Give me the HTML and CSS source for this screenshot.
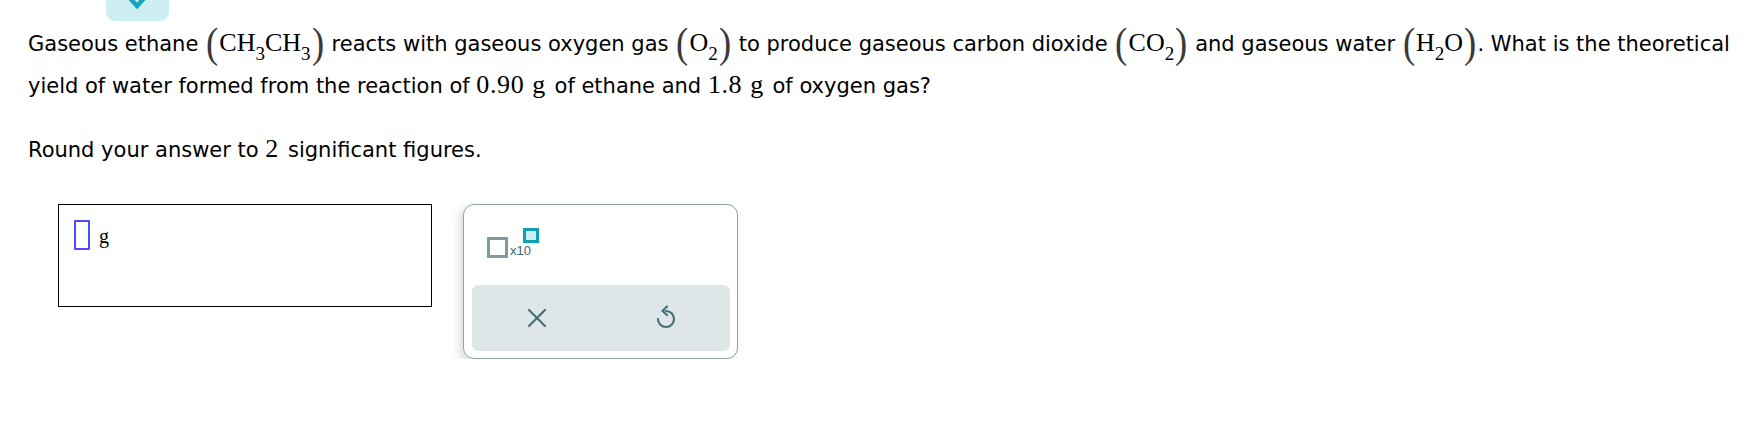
FILE: index.html
```html
<!DOCTYPE html>
<html>
<head>
<meta charset="utf-8">
<link rel="stylesheet" href="styles.css">
</head>
<body>
<div class="page">
  <div class="tab-row">
    <div class="tab">
      <svg class="chev" width="26" height="12" viewBox="0 0 26 12"><polyline points="3,-4 12,6 21,-4" fill="none" stroke="#19a2bb" stroke-width="4.5" stroke-linejoin="miter"/></svg>
    </div>
  </div>
  <div class="question">
    <p class="q-line">Gaseous ethane <span class="m"><span class="paren">(</span>CH<span class="sub">3</span>CH<span class="sub">3</span><span class="paren">)</span></span> reacts with gaseous oxygen gas <span class="m"><span class="paren">(</span>O<span class="sub">2</span><span class="paren">)</span></span> to produce gaseous carbon dioxide <span class="m"><span class="paren">(</span>CO<span class="sub">2</span><span class="paren">)</span></span> and gaseous water <span class="m"><span class="paren">(</span>H<span class="sub">2</span>O<span class="paren">)</span></span>. What is the theoretical</p>
    <p class="q-line">yield of water formed from the reaction of <span class="m num">0.90<span class="g">g</span></span> of ethane and <span class="m num">1.8<span class="g">g</span></span> of oxygen gas?</p>
    <p class="q-round">Round your answer to <span class="m sig">2</span> significant figures.</p>
  </div>
  <div class="answer-row">
    <div class="answer-box">
      <span class="slot"></span><span class="unit">g</span>
    </div>
    <div class="palette">
      <div class="tools">
        <div class="sci">
          <span class="sci-box"></span><span class="sci-x">x10</span><span class="sci-exp"></span>
        </div>
      </div>
      <div class="actions">
        <button class="act" aria-label="clear">
          <svg width="20" height="20" viewBox="0 0 20 20"><path d="M2 2 L18 18 M18 2 L2 18" stroke="#466f7c" stroke-width="2.2" stroke-linecap="round" fill="none"/></svg>
        </button>
        <button class="act" aria-label="undo">
          <svg width="22" height="26" viewBox="0 0 22 26"><path d="M11 6 A8 8 0 1 1 3 14" stroke="#466f7c" stroke-width="2.2" fill="none" stroke-linecap="round"/><path d="M12 1.5 L7.5 6 L12 10" stroke="#466f7c" stroke-width="2.2" fill="none" stroke-linecap="round" stroke-linejoin="round"/></svg>
        </button>
      </div>
    </div>
  </div>
</div>
</body>
</html>
```
FILE: styles.css
```css
html, body {
  margin: 0;
  padding: 0;
  background: #ffffff;
}
.page {
  font-family: "DejaVu Sans", Verdana, sans-serif;
  color: #000;
  font-size: 21px;
}
.tab-row {
  height: 21px;
  padding-left: 106px;
}
.tab {
  width: 63px;
  height: 21px;
  background: #cdeef3;
  border-radius: 0 0 9px 9px;
  display: flex;
  justify-content: center;
}
.chev {
  display: block;
  margin-left: 1px;
}
.question {
  padding-left: 28px;
}
.q-line {
  margin: 0;
  line-height: 42px;
  white-space: nowrap;
}
.q-line:first-child {
  margin-top: 2px;
}
.q-round {
  margin: 22px 0 0 0;
  line-height: 42px;
}
.m {
  font-family: "Liberation Serif", "Times New Roman", serif;
  font-size: 26px;
  line-height: 0;
}
.num {
  letter-spacing: 0.6px;
}
.sig {
  margin-right: 3px;
}
.g {
  margin-left: 8px;
  margin-right: 2px;
}
.paren {
  display: inline-block;
  font-size: 43px;
  line-height: 0;
  color: #3a3a3a;
  vertical-align: -6px;
  transform: scaleX(0.85);
}
.sub {
  font-size: 19px;
  vertical-align: -9px;
  line-height: 0;
}
.answer-row {
  display: flex;
  align-items: flex-start;
  gap: 31px;
  margin-top: 33px;
  padding-left: 58px;
}
.answer-box {
  width: 372px;
  height: 101px;
  border: 1px solid #000;
  display: flex;
  align-items: flex-start;
  padding: 0;
}
.slot {
  display: block;
  width: 12px;
  height: 26px;
  border: 2px solid #4d4dff;
  border-radius: 1px;
  margin: 15px 0 0 15px;
}
.unit {
  font-family: "Liberation Serif", "Times New Roman", serif;
  font-size: 20px;
  margin: 19px 0 0 9px;
  line-height: 24px;
}
.palette {
  width: 275px;
  height: 155px;
  border: 1px solid #8fa2a8;
  border-radius: 11px;
  box-shadow: -4px 4px 9px rgba(60, 80, 90, 0.18);
  padding: 0 7px 7px 8px;
  box-sizing: border-box;
  display: flex;
  flex-direction: column;
  justify-content: space-between;
}
.tools {
  height: 74px;
  position: relative;
}
.sci {
  position: relative;
  margin: 32px 0 0 15px;
  width: 60px;
  height: 22px;
}
.sci-box {
  position: absolute;
  left: 0;
  top: 0;
  width: 15px;
  height: 15px;
  border: 3px solid #7f9aa1;
  background: #fff;
}
.sci-x {
  position: absolute;
  left: 23px;
  top: 7px;
  font-family: "Liberation Sans", Arial, sans-serif;
  font-size: 13px;
  color: #3f6672;
  line-height: 13px;
}
.sci-exp {
  position: absolute;
  left: 36px;
  top: -9px;
  width: 10px;
  height: 9px;
  border: 3px solid #119fb6;
  background: #c9eef4;
}
.actions {
  height: 66px;
  background: #dfe6e8;
  border-radius: 6px;
  display: flex;
}
.act {
  flex: 1;
  border: 0;
  background: transparent;
  display: flex;
  align-items: center;
  justify-content: center;
  padding: 0;
}
.act svg {
  display: block;
}
```
